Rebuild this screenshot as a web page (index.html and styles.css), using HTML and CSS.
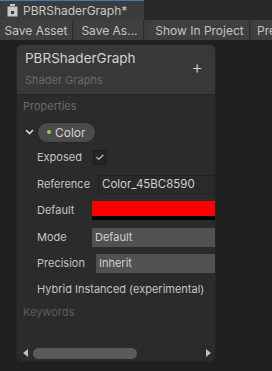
FILE: index.html
```html
<!DOCTYPE html>
<html>
<head>
    <title>PBRShaderGraph</title>
    <link rel="stylesheet" href="styles.css">
</head>
<body>

<div class="tabbar">
    <div class="tab">
        <svg class="tab-icon" width="11" height="13" viewBox="0 0 11 13">
            <rect x="3" y="0" width="5" height="2" fill="#c8c8c8"/>
            <rect x="0.5" y="2.5" width="10" height="10" fill="#c8c8c8"/>
            <rect x="4" y="7" width="3" height="3" fill="#3c3c3c"/>
        </svg>
        <span>PBRShaderGraph*</span>
    </div>
</div>

<div class="toolbar">
    <button class="tool">Save Asset</button>
    <button class="tool">Save As...</button>
    <button class="tool">Show In Project</button>
    <button class="tool">Pre</button>
</div>

<div class="graph">
    <div class="blackboard">
        <div class="bb-header">
            <div class="bb-title">PBRShaderGraph</div>
            <div class="bb-add">+</div>
            <div class="bb-sub">Shader Graphs</div>
        </div>

        <div class="bb-body">
            <div class="section">Properties</div>

            <div class="prop">
                <svg class="chevron" width="9" height="6" viewBox="0 0 9 6">
                    <path d="M1 1 L4.5 4.5 L8 1" fill="none" stroke="#d8d8d8" stroke-width="1.6"/>
                </svg>
                <div class="pill"><span class="dot"></span>Color</div>
            </div>

            <div class="row">
                <span class="lbl">Exposed</span>
                <span class="check">&#10003;</span>
            </div>
            <div class="row gap">
                <span class="lbl">Reference</span>
                <span class="field ref">Color_45BC8590</span>
            </div>
            <div class="row">
                <span class="lbl">Default</span>
                <span class="swatch"></span>
            </div>
            <div class="row gap">
                <span class="lbl">Mode</span>
                <span class="field drop">Default</span>
            </div>
            <div class="row">
                <span class="lbl">Precision</span>
                <span class="field drop prec">Inherit</span>
            </div>
            <div class="row">
                <span class="lbl wide">Hybrid Instanced (experimental)</span>
                <span class="check off"></span>
            </div>

            <div class="section kw">Keywords</div>
        </div>

        <div class="hscroll">
            <span class="arrow left"></span>
            <span class="thumb"></span>
            <span class="arrow right"></span>
        </div>
    </div>
</div>

</body>
</html>
```

FILE: styles.css
```css
body {
    margin: 0;
    width: 272px;
    height: 371px;
    overflow: hidden;
    background-color: #202020;
    font-family: Inter, "Noto Sans", sans-serif;
    font-size: 12px;
    color: #c4c4c4;
}

.tabbar {
    height: 20px;
    background-color: #282828;
    display: flex;
}

.tab {
    width: 144px;
    height: 20px;
    box-sizing: border-box;
    background-color: #3c3c3c;
    border-top: 1px solid #3a79bb;
    display: flex;
    align-items: center;
    padding-left: 7px;
    gap: 5px;
    font-size: 12px;
    color: #c8c8c8;
}

.toolbar {
    height: 20px;
    background-color: #3c3c3c;
    display: flex;
    border-bottom: 1px solid #232323;
    overflow: hidden;
}

.tool {
    font-family: inherit;
    font-size: 12px;
    color: #c4c4c4;
    background-color: #3f3f3f;
    border: none;
    border-right: 1px solid #2a2a2a;
    padding: 0 4px;
    margin-right: 3px;
    height: 20px;
    white-space: nowrap;
    flex-shrink: 0;
}

.tool:nth-child(1) {
    width: 73px;
}

.tool:nth-child(2) {
    width: 68px;
}

.tool:nth-child(3) {
    margin-left: 3px;
    width: 100px;
}

.tool:nth-child(4) {
    text-align: left;
    width: 30px;
}

.graph {
    padding: 4px 0 0 17px;
}

.blackboard {
    width: 198px;
    height: 316px;
    background-color: #2b2b2b;
    border-radius: 5px;
    overflow: hidden;
    display: flex;
    flex-direction: column;
    box-shadow: 0 0 0 1px #242424;
}

.bb-header {
    background-color: #383838;
    height: 50px;
    padding: 5px 8px 0 8px;
    box-sizing: border-box;
    position: relative;
    border-bottom: 1px solid #242424;
}

.bb-title {
    font-size: 13.5px;
    color: #d2d2d2;
}

.bb-sub {
    margin-top: 7px;
    color: #6a6a6a;
    font-size: 11px;
}

.bb-add {
    position: absolute;
    right: 12px;
    top: 12px;
    font-size: 18px;
    font-weight: 300;
    color: #cfcfcf;
}

.bb-body {
    flex: 1;
    padding: 0 0 0 6px;
    font-size: 11px;
}

.section {
    color: #6c6c6c;
    margin-top: 1px;
    height: 20px;
    line-height: 20px;
}

.section.kw {
    color: #5b5b5b;
    margin-top: 0;
}

.prop {
    display: flex;
    align-items: center;
    height: 22px;
    margin-top: 5px;
    margin-bottom: 1px;
}

.chevron {
    margin-left: 2px;
    margin-right: 3px;
}

.pill {
    display: flex;
    align-items: center;
    height: 21px;
    box-sizing: border-box;
    padding: 0 9px 0 9px;
    background-color: #4b4b4b;
    border: 1px solid #232323;
    border-radius: 11px;
    color: #d4d4d4;
    font-size: 12px;
}

.dot {
    width: 4px;
    height: 4px;
    border-radius: 50%;
    background-color: #8bd456;
    margin-right: 4px;
}

.row {
    display: flex;
    align-items: center;
    height: 26px;
    padding-left: 14px;
    white-space: nowrap;
}

.row.gap {
    margin-top: 1px;
}

.lbl {
    width: 55px;
    flex-shrink: 0;
    color: #c4c4c4;
}

.lbl.wide {
    width: auto;
    margin-right: 10px;
}

.check {
    width: 13px;
    height: 15px;
    flex-shrink: 0;
    box-sizing: border-box;
    border: 1px solid #1c1c1c;
    background-color: #242424;
    color: #e0e0e0;
    font-size: 11px;
    line-height: 13px;
    text-align: center;
    margin-left: 1px;
}

.check.off {
    height: 12px;
    border-color: #3a3a3a;
}

.field {
    flex: 1;
    height: 19px;
    line-height: 19px;
    box-sizing: border-box;
    padding-left: 3px;
    color: #d0d0d0;
}

.ref {
    margin-left: 6px;
    background-color: #2a2a2a;
    border: 1px solid #212121;
    border-right: none;
    line-height: 17px;
    font-size: 11.5px;
}

.swatch {
    flex: 1;
    height: 19px;
    box-sizing: border-box;
    background-color: #ff0000;
    border-bottom: 4px solid #000;
}

.drop {
    background-color: #515151;
}

.prec {
    margin-left: 4px;
}

.hscroll {
    height: 14px;
    display: flex;
    align-items: center;
    padding: 0 4px 1px 6px;
    background-color: #2b2b2b;
}

.arrow {
    width: 0;
    height: 0;
    border-top: 4px solid transparent;
    border-bottom: 4px solid transparent;
}

.arrow.left {
    border-right: 5px solid #c0c0c0;
}

.arrow.right {
    margin-left: auto;
    border-left: 5px solid #c0c0c0;
}

.thumb {
    width: 104px;
    height: 11px;
    border-radius: 6px;
    background-color: #5a5a5a;
    margin-left: 5px;
}
```
